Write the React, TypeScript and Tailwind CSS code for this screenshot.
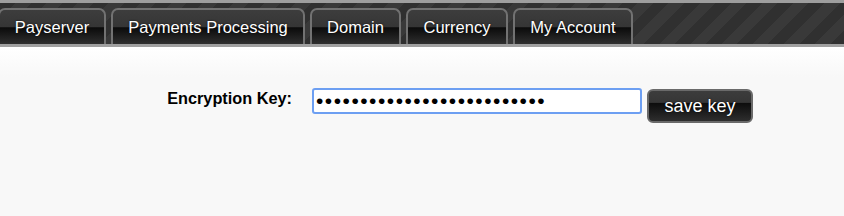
import { useState } from 'react';

const tabs = [
  { label: 'Payserver', w: 'w-[108px] -ml-[2px]' },
  { label: 'Payments Processing', w: 'w-[194px]' },
  { label: 'Domain', w: 'w-[91px]' },
  { label: 'Currency', w: 'w-[102px]' },
  { label: 'My Account', w: 'w-[120px]' },
];

export default function App() {
  const [key, setKey] = useState('abcdefghijklmnopqrstuvwxyz');

  return (
    <div className="w-[844px] h-[216px] overflow-hidden font-['Liberation_Sans',Arial,sans-serif] bg-[#f8f8f8]">
      {/* Top navigation */}
      <div className="border-t-[3px] border-b-[3px] border-t-[#9e9e9e] border-b-[#a0a0a0] pt-[5px] bg-[repeating-linear-gradient(135deg,#303030_0px,#303030_11px,#393939_11px,#393939_22px)]">
        <div className="flex gap-[5px]">
          {tabs.map((tab) => (
            <div
              key={tab.label}
              className={`${tab.w} h-[36px] shrink-0 border-2 border-b-0 border-[#727272] rounded-t-[7px] bg-[linear-gradient(to_bottom,#3d3d3d_0%,#353535_50%,#0b0b0b_52%,#1c1c1c_75%,#2f2f2f_100%)] flex items-center justify-center text-white text-[16.5px] leading-none [text-shadow:0_0_2px_rgba(0,0,0,0.8)] cursor-pointer`}
            >
              {tab.label}
            </div>
          ))}
        </div>
      </div>

      {/* Content */}
      <div className="pt-[41px] bg-[linear-gradient(to_bottom,#ffffff_0px,#f8f8f8_30px)] h-full">
        <div className="flex items-start">
          <label className="w-[292px] text-right font-bold text-[16.3px] text-black leading-[18px] mt-[1px]">
            Encryption Key:
          </label>
          <input
            type="password"
            value={key}
            onChange={(e) => setKey(e.target.value)}
            autoFocus
            className="ml-[20px] w-[330px] h-[26px] border-2 border-[#6d9ff2] rounded-[3px] bg-white px-[2px] text-[21px] leading-none tracking-[1.5px] text-black caret-black outline-none"
          />
          <button className="ml-[5px] mt-[1px] w-[106px] h-[34px] border-2 border-[#6a6a6a] rounded-[6px] bg-[linear-gradient(to_bottom,#3c3c3c_0%,#363636_38%,#0d0d0d_41%,#1d1d1d_70%,#2e2e2e_100%)] text-white text-[18px] leading-none [text-shadow:0_0_2px_rgba(0,0,0,0.8)]">
            save key
          </button>
        </div>
      </div>
    </div>
  );
}
